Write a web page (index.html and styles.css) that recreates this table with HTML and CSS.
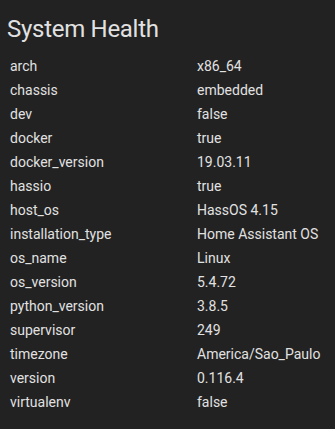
FILE: index.html
```html
<!DOCTYPE html>
<html>
<head>
<meta charset="utf-8">
<link rel="stylesheet" href="styles.css">
</head>
<body>
<div class="card">
  <h1 class="title">System Health</h1>
  <div class="table">
    <div class="row"><span class="key">arch</span><span class="val">x86_64</span></div>
    <div class="row"><span class="key">chassis</span><span class="val">embedded</span></div>
    <div class="row"><span class="key">dev</span><span class="val">false</span></div>
    <div class="row"><span class="key">docker</span><span class="val">true</span></div>
    <div class="row"><span class="key">docker_version</span><span class="val">19.03.11</span></div>
    <div class="row"><span class="key">hassio</span><span class="val">true</span></div>
    <div class="row"><span class="key">host_os</span><span class="val">HassOS 4.15</span></div>
    <div class="row"><span class="key">installation_type</span><span class="val">Home Assistant OS</span></div>
    <div class="row"><span class="key">os_name</span><span class="val">Linux</span></div>
    <div class="row"><span class="key">os_version</span><span class="val">5.4.72</span></div>
    <div class="row"><span class="key">python_version</span><span class="val">3.8.5</span></div>
    <div class="row"><span class="key">supervisor</span><span class="val">249</span></div>
    <div class="row"><span class="key">timezone</span><span class="val">America/Sao_Paulo</span></div>
    <div class="row"><span class="key">version</span><span class="val">0.116.4</span></div>
    <div class="row"><span class="key">virtualenv</span><span class="val">false</span></div>
  </div>
</div>
</body>
</html>
```
FILE: styles.css
```css
html, body {
  margin: 0;
  padding: 0;
  background: #222222;
}
.card {
  width: 335px;
  height: 429px;
  background: #222222;
  color: #e1e1e1;
  font-family: Roboto, "Noto Sans", sans-serif;
  padding: 13px 0 0 0;
  box-sizing: border-box;
}
.title {
  margin: 0 0 9px 0;
  padding-left: 7px;
  font-size: 24px;
  font-weight: 400;
  line-height: 32px;
  letter-spacing: -0.012em;
}
.table {
  display: flex;
  flex-direction: column;
  padding-left: 10px;
}
.row {
  display: grid;
  grid-template-columns: 187px 1fr;
  height: 24px;
  line-height: 24px;
  font-size: 14px;
}
```
